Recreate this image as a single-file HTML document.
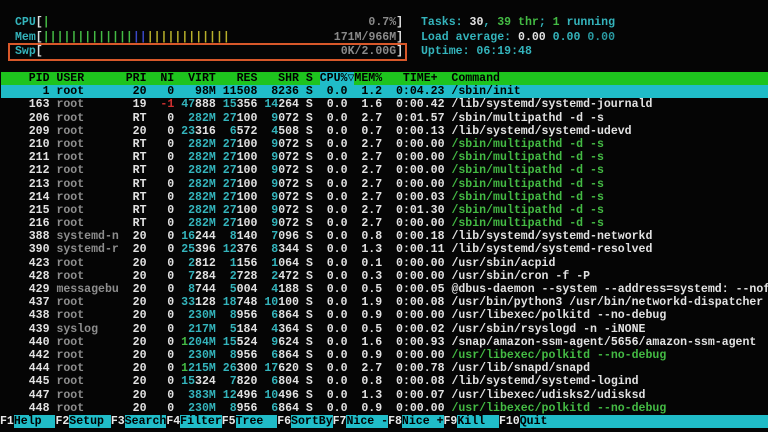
<!DOCTYPE html>
<html><head><meta charset="utf-8"><style>
html,body{margin:0;padding:0;background:#050505;width:768px;height:432px;overflow:hidden}
body{font-family:"Liberation Mono",monospace;font-size:11.55px;font-weight:bold;color:#e2e2e2;position:relative}
.l{position:absolute;white-space:pre;line-height:14px;height:14px}
#p{position:absolute;left:1px;top:72px;width:767px;overflow:hidden}
#p div{white-space:pre;line-height:13.2px;height:13.2px;overflow:hidden}
.c{color:#34b4bc}.g{color:#44bb44}.u{color:#8e8e8e}.r{color:#d03030}.b{color:#3a48c8}.y{color:#b8b02a}.d{color:#8a8a8a}.w{color:#f0f0f0}
.hd{background:#1ec41e;color:#000}
.hc{background:#20bcc8}
.sel{background:#20bcc8;color:#000}
.fb{background:#20bcc8;color:#000}
.k{background:#050505;color:#e8e8e8}
#box{position:absolute;left:8px;top:43px;width:395px;height:14px;border:2px solid #d8582a}
</style></head><body>
<div class="l" style="left:15px;top:16px"><span class="c">CPU</span>[<span class="g">|</span>                                              <span class="d">0.7%</span>]</div>
<div class="l" style="left:15px;top:30.5px"><span class="c">Mem</span>[<span class="g">|||||||||||||</span><span class="b">||</span><span class="y">||||||||||||</span>               <span class="d">171M/966M</span>]</div>
<div class="l" style="left:15px;top:45px"><span class="c">Swp</span>[                                           <span class="d">0K/2.00G</span>]</div>
<div id="box"></div>
<div class="l" style="left:421px;top:16px"><span class="c">Tasks: </span>30<span class="c">, </span><span class="g">39 thr</span><span class="c">; </span><span class="g">1</span><span class="c"> running</span></div>
<div class="l" style="left:421px;top:30.5px"><span class="c">Load average: </span>0.00 <span class="c">0.00</span> <span style="color:#2a9aa2">0.00</span></div>
<div class="l" style="left:421px;top:45px"><span class="c">Uptime: 06:19:48</span></div>
<div id="p">
<div class="hd">    PID USER      PRI  NI  VIRT   RES   SHR S <span class="hc">CPU%▽</span>MEM%   TIME+  Command                                                         </div>
<div class="sel">      1 root       20   0   98M 11508  8236 S  0.0  1.2  0:04.23 /sbin/init                                                        </div>
<div>    163 <span class="u">root</span>       19  <span class="r">-1</span> <span class="c">47</span>888 <span class="c">15</span>356 <span class="c">14</span>264 S  0.0  1.6  0:00.42 /lib/systemd/systemd-journald</div>
<div>    206 <span class="u">root</span>       RT   0  <span class="c">282M</span> <span class="c">27</span>100  <span class="c">9</span>072 S  0.0  2.7  0:01.57 /sbin/multipathd -d -s</div>
<div>    209 <span class="u">root</span>       20   0 <span class="c">23</span>316  <span class="c">6</span>572  <span class="c">4</span>508 S  0.0  0.7  0:00.13 /lib/systemd/systemd-udevd</div>
<div>    210 <span class="u">root</span>       RT   0  <span class="c">282M</span> <span class="c">27</span>100  <span class="c">9</span>072 S  0.0  2.7  0:00.00 <span class="g">/sbin/multipathd -d -s</span></div>
<div>    211 <span class="u">root</span>       RT   0  <span class="c">282M</span> <span class="c">27</span>100  <span class="c">9</span>072 S  0.0  2.7  0:00.00 <span class="g">/sbin/multipathd -d -s</span></div>
<div>    212 <span class="u">root</span>       RT   0  <span class="c">282M</span> <span class="c">27</span>100  <span class="c">9</span>072 S  0.0  2.7  0:00.00 <span class="g">/sbin/multipathd -d -s</span></div>
<div>    213 <span class="u">root</span>       RT   0  <span class="c">282M</span> <span class="c">27</span>100  <span class="c">9</span>072 S  0.0  2.7  0:00.00 <span class="g">/sbin/multipathd -d -s</span></div>
<div>    214 <span class="u">root</span>       RT   0  <span class="c">282M</span> <span class="c">27</span>100  <span class="c">9</span>072 S  0.0  2.7  0:00.03 <span class="g">/sbin/multipathd -d -s</span></div>
<div>    215 <span class="u">root</span>       RT   0  <span class="c">282M</span> <span class="c">27</span>100  <span class="c">9</span>072 S  0.0  2.7  0:01.30 <span class="g">/sbin/multipathd -d -s</span></div>
<div>    216 <span class="u">root</span>       RT   0  <span class="c">282M</span> <span class="c">27</span>100  <span class="c">9</span>072 S  0.0  2.7  0:00.00 <span class="g">/sbin/multipathd -d -s</span></div>
<div>    388 <span class="u">systemd-n</span>  20   0 <span class="c">16</span>244  <span class="c">8</span>140  <span class="c">7</span>096 S  0.0  0.8  0:00.18 /lib/systemd/systemd-networkd</div>
<div>    390 <span class="u">systemd-r</span>  20   0 <span class="c">25</span>396 <span class="c">12</span>376  <span class="c">8</span>344 S  0.0  1.3  0:00.11 /lib/systemd/systemd-resolved</div>
<div>    423 <span class="u">root</span>       20   0  <span class="c">2</span>812  <span class="c">1</span>156  <span class="c">1</span>064 S  0.0  0.1  0:00.00 /usr/sbin/acpid</div>
<div>    428 <span class="u">root</span>       20   0  <span class="c">7</span>284  <span class="c">2</span>728  <span class="c">2</span>472 S  0.0  0.3  0:00.00 /usr/sbin/cron -f -P</div>
<div>    429 <span class="u">messagebu</span>  20   0  <span class="c">8</span>744  <span class="c">5</span>004  <span class="c">4</span>188 S  0.0  0.5  0:00.05 @dbus-daemon --system --address=systemd: --nofork</div>
<div>    437 <span class="u">root</span>       20   0 <span class="c">33</span>128 <span class="c">18</span>748 <span class="c">10</span>100 S  0.0  1.9  0:00.08 /usr/bin/python3 /usr/bin/networkd-dispatcher --run</div>
<div>    438 <span class="u">root</span>       20   0  <span class="c">230M</span>  <span class="c">8</span>956  <span class="c">6</span>864 S  0.0  0.9  0:00.00 /usr/libexec/polkitd --no-debug</div>
<div>    439 <span class="u">syslog</span>     20   0  <span class="c">217M</span>  <span class="c">5</span>184  <span class="c">4</span>364 S  0.0  0.5  0:00.02 /usr/sbin/rsyslogd -n -iNONE</div>
<div>    440 <span class="u">root</span>       20   0 <span class="g">1</span><span class="c">204M</span> <span class="c">15</span>524  <span class="c">9</span>624 S  0.0  1.6  0:00.93 /snap/amazon-ssm-agent/5656/amazon-ssm-agent</div>
<div>    442 <span class="u">root</span>       20   0  <span class="c">230M</span>  <span class="c">8</span>956  <span class="c">6</span>864 S  0.0  0.9  0:00.00 <span class="g">/usr/libexec/polkitd --no-debug</span></div>
<div>    444 <span class="u">root</span>       20   0 <span class="g">1</span><span class="c">215M</span> <span class="c">26</span>300 <span class="c">17</span>620 S  0.0  2.7  0:00.78 /usr/lib/snapd/snapd</div>
<div>    445 <span class="u">root</span>       20   0 <span class="c">15</span>324  <span class="c">7</span>820  <span class="c">6</span>804 S  0.0  0.8  0:00.08 /lib/systemd/systemd-logind</div>
<div>    447 <span class="u">root</span>       20   0  <span class="c">383M</span> <span class="c">12</span>496 <span class="c">10</span>496 S  0.0  1.3  0:00.07 /usr/libexec/udisks2/udisksd</div>
<div>    448 <span class="u">root</span>       20   0  <span class="c">230M</span>  <span class="c">8</span>956  <span class="c">6</span>864 S  0.0  0.9  0:00.00 <span class="g">/usr/libexec/polkitd --no-debug</span></div>
</div>
<div class="l fb" style="left:0;top:415px;width:768px;line-height:13.2px;height:13.2px;overflow:hidden"><span class="k">F1</span>Help  <span class="k">F2</span>Setup <span class="k">F3</span>Search<span class="k">F4</span>Filter<span class="k">F5</span>Tree  <span class="k">F6</span>SortBy<span class="k">F7</span>Nice -<span class="k">F8</span>Nice +<span class="k">F9</span>Kill  <span class="k">F10</span>Quit</div>
</body></html>
